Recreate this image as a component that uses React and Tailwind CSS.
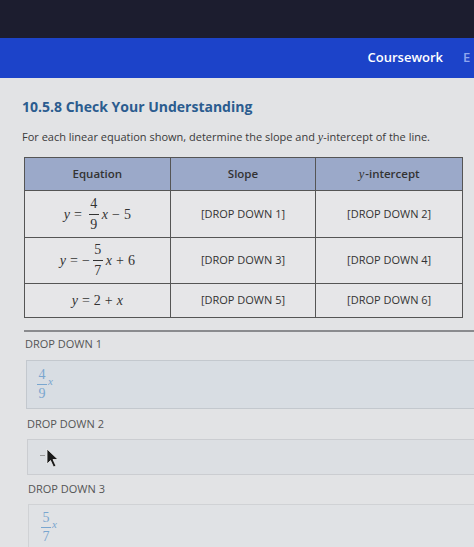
import React from 'react'

const math = { fontFamily: '"Liberation Serif", "DejaVu Serif", serif' }

function Frac({ n, d }) {
  return (
    <span className="inline-flex flex-col items-center leading-none mx-[3px] align-middle">
      <span className="text-[14px] pb-[3px]">{n}</span>
      <span className="block w-[10px] border-t border-current" />
      <span className="text-[14px] pt-[3px]">{d}</span>
    </span>
  )
}

function Equation({ children }) {
  return (
    <div className="flex items-center justify-center text-[14px] text-[#333]" style={math}>
      {children}
    </div>
  )
}

const rows = [
  {
    eq: (
      <Equation>
        <i className="italic">y</i>
        <span className="mx-[4px]">=</span>
        <Frac n="4" d="9" />
        <i className="italic">x</i>
        <span className="mx-[4px]">−</span>5
      </Equation>
    ),
    slope: '[DROP DOWN 1]',
    yint: '[DROP DOWN 2]',
    h: 'h-[47px]',
  },
  {
    eq: (
      <Equation>
        <i className="italic">y</i>
        <span className="mx-[4px]">=</span>−
        <Frac n="5" d="7" />
        <i className="italic">x</i>
        <span className="mx-[4px]">+</span>6
      </Equation>
    ),
    slope: '[DROP DOWN 3]',
    yint: '[DROP DOWN 4]',
    h: 'h-[46px]',
  },
  {
    eq: (
      <Equation>
        <i className="italic">y</i>
        <span className="mx-[4px]">=</span>2<span className="mx-[4px]">+</span>
        <i className="italic">x</i>
      </Equation>
    ),
    slope: '[DROP DOWN 5]',
    yint: '[DROP DOWN 6]',
    h: 'h-[33px]',
  },
]

function AnswerFrac({ n, d }) {
  return (
    <div className="flex items-center text-[#7aa6cf]" style={math}>
      <span className="inline-flex flex-col items-center leading-none">
        <span className="text-[14px] pb-[2px]">{n}</span>
        <span className="block w-[10px] border-t border-current" />
        <span className="text-[14px] pt-[2px]">{d}</span>
      </span>
      <i className="italic text-[11px] -mt-[6px] ml-[1px]">x</i>
    </div>
  )
}

export default function App() {
  return (
    <div
      className="w-[474px] h-[547px] overflow-hidden bg-[#e2e3e5]"
      style={{ fontFamily: '"Open Sans", "Noto Sans", sans-serif' }}
    >
      <div className="h-[38px] bg-[#1c1d2f]" />
      <div className="h-[40px] bg-[#1c43c9] flex items-center justify-end">
        <span className="text-white text-[13px] font-semibold mr-[20px]">Coursework</span>
        <span className="text-[#8fa6ee] text-[13px] font-semibold w-[11px] overflow-hidden">E</span>
      </div>

      <div className="pl-[22px]">
        <h1 className="pt-[19px] text-[14px] font-bold text-[#2b5c8f] leading-[20px]">
          10.5.8 Check Your Understanding
        </h1>
        <p className="mt-[12px] text-[11px] text-[#3a3a3a] leading-[16px] whitespace-nowrap">
          For each linear equation shown, determine the slope and{' '}
          <i style={math} className="italic text-[12px]">y</i>-intercept of the line.
        </p>

        <div className="mt-[12px] ml-[2px] w-[439px] border border-[#555] grid grid-cols-3">
          <div className="h-[33px] bg-[#9ba9c9] flex items-center justify-center text-[11.5px] font-semibold text-[#333] border-r border-b border-[#555]">
            Equation
          </div>
          <div className="h-[33px] bg-[#9ba9c9] flex items-center justify-center text-[11.5px] font-semibold text-[#333] border-r border-b border-[#555]">
            Slope
          </div>
          <div className="h-[33px] bg-[#9ba9c9] flex items-center justify-center text-[11.5px] font-semibold text-[#333] border-b border-[#555]">
            <i style={math} className="italic font-normal text-[12.5px] mr-[1px]">y</i>-intercept
          </div>
          {rows.map((r, i) => (
            <React.Fragment key={i}>
              <div className={`${r.h} bg-[#e6e6e8] flex items-center justify-center border-r border-[#555] ${i < 2 ? 'border-b' : ''}`}>
                {r.eq}
              </div>
              <div className={`${r.h} bg-[#e6e6e8] flex items-center justify-center text-[11px] text-[#333] border-r border-[#555] ${i < 2 ? 'border-b' : ''}`}>
                {r.slope}
              </div>
              <div className={`${r.h} bg-[#e6e6e8] flex items-center justify-center text-[11px] text-[#333] border-[#555] ${i < 2 ? 'border-b' : ''}`}>
                {r.yint}
              </div>
            </React.Fragment>
          ))}
        </div>

        <div className="mt-[12px] ml-[2px] border-t-2 border-[#8a8b8e]" />

        <div className="ml-[3px] mt-[4px] text-[11px] text-[#555] leading-[16px]">DROP DOWN 1</div>
        <div className="ml-[4px] mt-[8px] h-[49px] bg-[#d8dde3] border border-[#c3c8ce] border-r-0 flex items-center pl-[10px]">
          <AnswerFrac n="4" d="9" />
        </div>

        <div className="ml-[5px] mt-[7px] text-[11px] text-[#555] leading-[16px]">DROP DOWN 2</div>
        <div className="relative ml-[5px] mt-[7px] h-[36px] bg-[#dcdfe3] border border-[#cbcdd1] border-r-0">
          <span className="absolute left-[12px] top-[15px] w-[5px] border-t border-[#999]" />
          <svg className="absolute left-[18px] top-[8px]" width="14" height="20" viewBox="0 0 14 20">
            <path d="M1 1 L1 16 L4.5 12.5 L7.5 19 L10 18 L7 11.5 L12 11.5 Z" fill="#1a1a1a" stroke="#f0f0f0" strokeWidth="0.8" />
          </svg>
        </div>

        <div className="ml-[6px] mt-[6px] text-[11px] text-[#555] leading-[16px]">DROP DOWN 3</div>
        <div className="ml-[6px] mt-[7px] h-[60px] bg-[#e0e2e5] border border-[#d0d2d5] border-r-0 flex items-start pt-[6px] pl-[12px]">
          <AnswerFrac n="5" d="7" />
        </div>
      </div>
    </div>
  )
}
